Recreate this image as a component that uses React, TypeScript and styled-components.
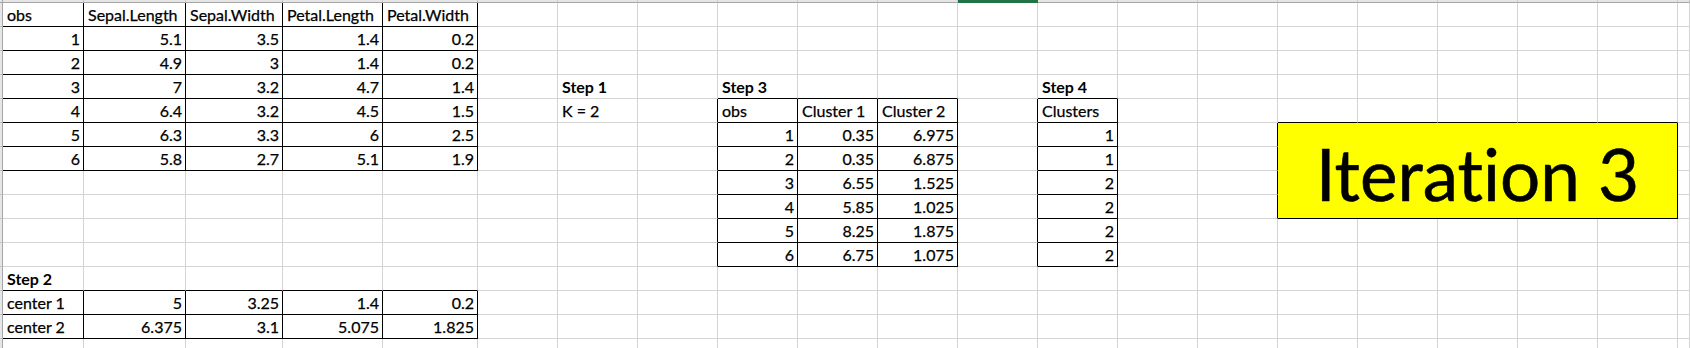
import React from "react";
import styled, { createGlobalStyle } from "styled-components";

const GRID = "#d4d4d4";
const EDGE = "#000000";
const HEAD_BG = "#e6e6e6";
const HEAD_LINE = "#a6a6a6";
const SELECT = "#217346";

// column widths include the 1px right grid line (A..T), U takes the rest
const COL_WIDTHS = [81, 102, 97, 100, 95, ...Array(15).fill(80)];
const COLS = COL_WIDTHS.length + 1;
const ROWS = 15;
const SELECTED_COL = 11;

type Region = { r0: number; r1: number; c0: number; c1: number };

const TABLES: Region[] = [
  { r0: 0, r1: 6, c0: 0, c1: 4 },
  { r0: 12, r1: 13, c0: 0, c1: 4 },
  { r0: 4, r1: 10, c0: 8, c1: 10 },
  { r0: 4, r1: 10, c0: 12, c1: 12 },
];

const BANNER: Region = { r0: 5, r1: 8, c0: 15, c1: 19 };

type CellData = { v: string; bold?: boolean };
const cells: Record<string, CellData> = {};

const put = (r: number, c: number, values: (string | number)[], bold = false) =>
  values.forEach((v, i) => {
    cells[`${r},${c + i}`] = { v: String(v), bold };
  });

put(0, 0, ["obs", "Sepal.Length", "Sepal.Width", "Petal.Length", "Petal.Width"]);
put(1, 0, [1, 5.1, 3.5, 1.4, 0.2]);
put(2, 0, [2, 4.9, 3, 1.4, 0.2]);
put(3, 0, [3, 7, 3.2, 4.7, 1.4]);
put(4, 0, [4, 6.4, 3.2, 4.5, 1.5]);
put(5, 0, [5, 6.3, 3.3, 6, 2.5]);
put(6, 0, [6, 5.8, 2.7, 5.1, 1.9]);

put(11, 0, ["Step 2"], true);
put(12, 0, ["center 1", 5, 3.25, 1.4, 0.2]);
put(13, 0, ["center 2", 6.375, 3.1, 5.075, 1.825]);

put(3, 6, ["Step 1"], true);
put(4, 6, ["K = 2"]);

put(3, 8, ["Step 3"], true);
put(4, 8, ["obs", "Cluster 1", "Cluster 2"]);
put(5, 8, [1, 0.35, 6.975]);
put(6, 8, [2, 0.35, 6.875]);
put(7, 8, [3, 6.55, 1.525]);
put(8, 8, [4, 5.85, 1.025]);
put(9, 8, [5, 8.25, 1.875]);
put(10, 8, [6, 6.75, 1.075]);

put(3, 12, ["Step 4"], true);
put(4, 12, ["Clusters"]);
[1, 1, 2, 2, 2, 2].forEach((v, i) => put(5 + i, 12, [v]));

const inside = (g: Region, r: number, c: number) =>
  r >= g.r0 && r <= g.r1 && c >= g.c0 && c <= g.c1;

const bordered = (r: number, c: number) =>
  [...TABLES, BANNER].some((g) => inside(g, r, c));

const GlobalStyle = createGlobalStyle`
  html, body {
    margin: 0;
    padding: 0;
    background: #ffffff;
    overflow: hidden;
  }
`;

const Sheet = styled.div`
  display: grid;
  grid-template-columns: 3px ${COL_WIDTHS.map((w) => `${w}px`).join(" ")} 1fr;
  grid-template-rows: 3px repeat(${ROWS}, 24px);
  width: 1690px;
  height: 348px;
  overflow: hidden;
  font-family: Lato, "Noto Sans", sans-serif;
  font-variant-ligatures: none;
  color: #000;
`;

const Corner = styled.div`
  box-sizing: border-box;
  background: ${HEAD_BG};
  border-right: 1px solid ${HEAD_LINE};
  border-bottom: 1px solid ${HEAD_LINE};
`;

const ColHead = styled.div<{ $selected: boolean }>`
  box-sizing: border-box;
  background: ${(p) => (p.$selected ? SELECT : HEAD_BG)};
  border-bottom: 1px solid ${(p) => (p.$selected ? SELECT : HEAD_LINE)};
  border-right: 1px solid ${(p) => (p.$selected ? SELECT : "#c8c8c8")};
`;

const RowHead = styled.div`
  box-sizing: border-box;
  background: ${HEAD_BG};
  border-right: 1px solid ${HEAD_LINE};
  border-bottom: 1px solid #c0c0c0;
`;

const Cell = styled.div<{
  $edgeR: boolean;
  $edgeB: boolean;
  $right: boolean;
  $bold?: boolean;
}>`
  box-sizing: border-box;
  border-right: 1px solid ${(p) => (p.$edgeR ? EDGE : GRID)};
  border-bottom: 1px solid ${(p) => (p.$edgeB ? EDGE : GRID)};
  padding: 0 3px 0 4px;
  font-size: 16px;
  line-height: 23px;
  font-weight: ${(p) => (p.$bold ? 700 : 400)};
  -webkit-text-stroke: ${(p) => (p.$bold ? "0" : "0.25px")} #000;
  text-align: ${(p) => (p.$right ? "right" : "left")};
  white-space: nowrap;
`;

const Banner = styled.div<{ $cols: number; $rows: number }>`
  grid-column: span ${(p) => p.$cols};
  grid-row: span ${(p) => p.$rows};
  box-sizing: border-box;
  display: flex;
  align-items: center;
  justify-content: center;
  padding-top: 6px;
  background: #ffff00;
  border-right: 1px solid ${EDGE};
  border-bottom: 1px solid ${EDGE};
  font-size: 71px;
  line-height: 1.2;
  -webkit-text-stroke: 0.6px #000;
  white-space: nowrap;
`;

const isNumber = (v: string) => v !== "" && !isNaN(Number(v));

export default function App() {
  const parts: React.ReactNode[] = [<Corner key="corner" />];

  for (let c = 0; c < COLS; c++) {
    parts.push(<ColHead key={`h${c}`} $selected={c === SELECTED_COL} />);
  }

  for (let r = 0; r < ROWS; r++) {
    parts.push(<RowHead key={`rh${r}`} />);
    for (let c = 0; c < COLS; c++) {
      if (inside(BANNER, r, c)) {
        if (r === BANNER.r0 && c === BANNER.c0) {
          parts.push(
            <Banner
              key="banner"
              $cols={BANNER.c1 - BANNER.c0 + 1}
              $rows={BANNER.r1 - BANNER.r0 + 1}
            >
              Iteration 3
            </Banner>
          );
        }
        continue;
      }
      const data = cells[`${r},${c}`];
      const own = bordered(r, c);
      parts.push(
        <Cell
          key={`${r},${c}`}
          $edgeR={own || bordered(r, c + 1)}
          $edgeB={own || bordered(r + 1, c)}
          $right={!!data && isNumber(data.v)}
          $bold={data?.bold}
        >
          {data?.v}
        </Cell>
      );
    }
  }

  return (
    <>
      <GlobalStyle />
      <Sheet>{parts}</Sheet>
    </>
  );
}
